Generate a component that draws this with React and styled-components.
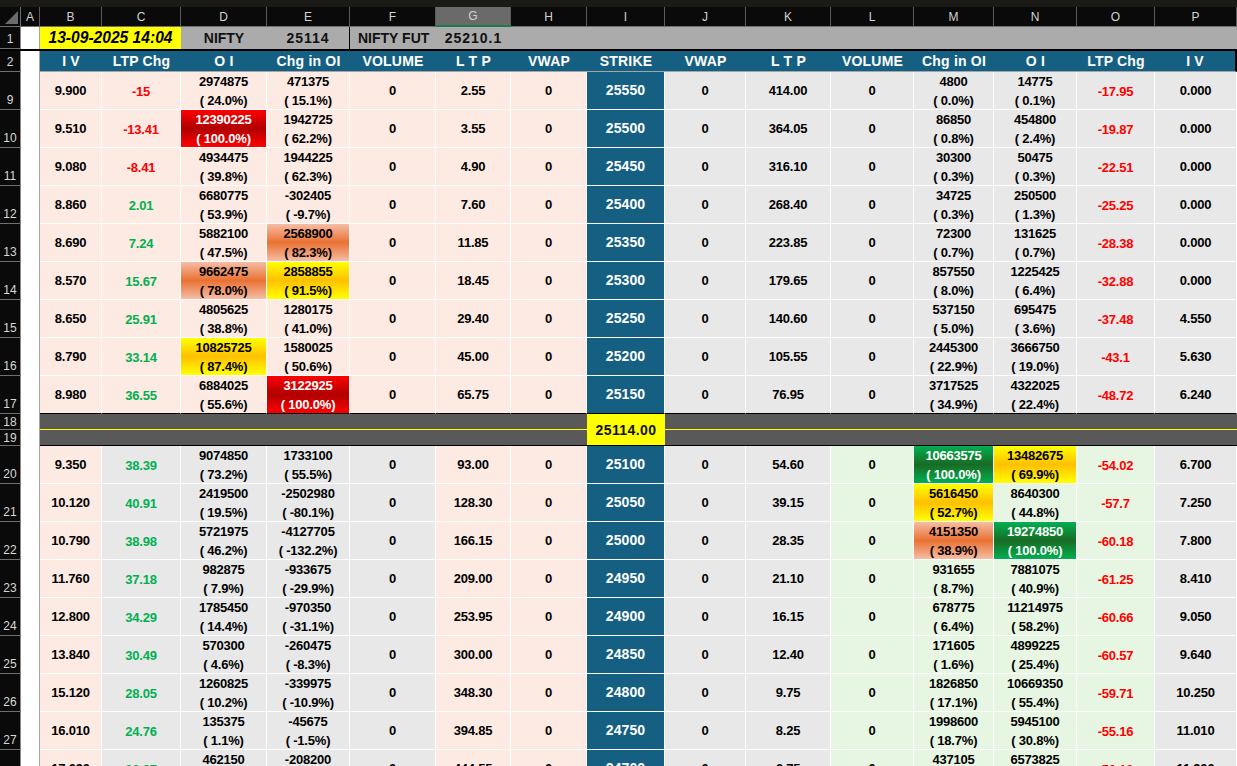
import React from "react";
import styled, {createGlobalStyle, css} from "styled-components";

const columns = "21px 19px 62px 79px 86px 83px 86px 75px 76px 78px 81px 85px 83px 80px 83px 78px 82px";
const letters = ["A", "B", "C", "D", "E", "F", "G", "H", "I", "J", "K", "L", "M", "N", "O", "P"];
const titles = ["I V", "LTP Chg", "O I", "Chg in OI", "VOLUME", "L T P", "VWAP", "STRIKE", "VWAP", "L T P", "VOLUME", "Chg in OI", "O I", "LTP Chg", "I V"];

// iv, chg, oi, chg oi, ltp, strike, ltp, chg oi, oi, chg, iv  (third value of a pair = highlight)
const upper = [
  [9, "9.900", "-15", ["2974875", "24.0"], ["471375", "15.1"], "2.55", "25550", "414.00", ["4800", "0.0"], ["14775", "0.1"], "-17.95", "0.000"],
  [10, "9.510", "-13.41", ["12390225", "100.0", "red"], ["1942725", "62.2"], "3.55", "25500", "364.05", ["86850", "0.8"], ["454800", "2.4"], "-19.87", "0.000"],
  [11, "9.080", "-8.41", ["4934475", "39.8"], ["1944225", "62.3"], "4.90", "25450", "316.10", ["30300", "0.3"], ["50475", "0.3"], "-22.51", "0.000"],
  [12, "8.860", "2.01", ["6680775", "53.9"], ["-302405", "-9.7"], "7.60", "25400", "268.40", ["34725", "0.3"], ["250500", "1.3"], "-25.25", "0.000"],
  [13, "8.690", "7.24", ["5882100", "47.5"], ["2568900", "82.3", "orange"], "11.85", "25350", "223.85", ["72300", "0.7"], ["131625", "0.7"], "-28.38", "0.000"],
  [14, "8.570", "15.67", ["9662475", "78.0", "orange"], ["2858855", "91.5", "yellow"], "18.45", "25300", "179.65", ["857550", "8.0"], ["1225425", "6.4"], "-32.88", "0.000"],
  [15, "8.650", "25.91", ["4805625", "38.8"], ["1280175", "41.0"], "29.40", "25250", "140.60", ["537150", "5.0"], ["695475", "3.6"], "-37.48", "4.550"],
  [16, "8.790", "33.14", ["10825725", "87.4", "yellow"], ["1580025", "50.6"], "45.00", "25200", "105.55", ["2445300", "22.9"], ["3666750", "19.0"], "-43.1", "5.630"],
  [17, "8.980", "36.55", ["6884025", "55.6"], ["3122925", "100.0", "red"], "65.75", "25150", "76.95", ["3717525", "34.9"], ["4322025", "22.4"], "-48.72", "6.240"],
];

const lower = [
  [20, "9.350", "38.39", ["9074850", "73.2"], ["1733100", "55.5"], "93.00", "25100", "54.60", ["10663575", "100.0", "green"], ["13482675", "69.9", "yellow"], "-54.02", "6.700"],
  [21, "10.120", "40.91", ["2419500", "19.5"], ["-2502980", "-80.1"], "128.30", "25050", "39.15", ["5616450", "52.7", "yellow"], ["8640300", "44.8"], "-57.7", "7.250"],
  [22, "10.790", "38.98", ["5721975", "46.2"], ["-4127705", "-132.2"], "166.15", "25000", "28.35", ["4151350", "38.9", "orange"], ["19274850", "100.0", "green"], "-60.18", "7.800"],
  [23, "11.760", "37.18", ["982875", "7.9"], ["-933675", "-29.9"], "209.00", "24950", "21.10", ["931655", "8.7"], ["7881075", "40.9"], "-61.25", "8.410"],
  [24, "12.800", "34.29", ["1785450", "14.4"], ["-970350", "-31.1"], "253.95", "24900", "16.15", ["678775", "6.4"], ["11214975", "58.2"], "-60.66", "9.050"],
  [25, "13.840", "30.49", ["570300", "4.6"], ["-260475", "-8.3"], "300.00", "24850", "12.40", ["171605", "1.6"], ["4899225", "25.4"], "-60.57", "9.640"],
  [26, "15.120", "28.05", ["1260825", "10.2"], ["-339975", "-10.9"], "348.30", "24800", "9.75", ["1826850", "17.1"], ["10669350", "55.4"], "-59.71", "10.250"],
  [27, "16.010", "24.76", ["135375", "1.1"], ["-45675", "-1.5"], "394.85", "24750", "8.25", ["1998600", "18.7"], ["5945100", "30.8"], "-55.16", "11.010"],
  [28, "17.090", "20.97", ["462150", "3.7"], ["-208200", "-6.7"], "444.55", "24700", "6.75", ["437105", "4.1"], ["6573825", "34.1"], "-50.10", "11.900"],
];

const upperTones = {iv: "pink", chg: "pink", oi: "pink", chgOi: "pink", vol: "pink", ltp: "pink", vwap: "pink", vwap2: "gray", ltp2: "gray", vol2: "gray", chgOi2: "gray", oi2: "gray", chg2: "gray", iv2: "gray"};
const lowerTones = {iv: "pink", chg: "gray", oi: "gray", chgOi: "gray", vol: "gray", ltp: "pink", vwap: "pink", vwap2: "gray", ltp2: "gray", vol2: "green", chgOi2: "green", oi2: "green", chg2: "green", iv2: "gray"};

const tones = {
  pink: css`background: #fdeae3;`,
  gray: css`background: #e8e8e8;`,
  green: css`background: #e7f6e2;`,
  strike: css`background: #156082; font-size: 14px; letter-spacing: 0.1px;`,
  red: css`background: linear-gradient(#f00, #b00000 50%, #f00);`,
  orange: css`background: linear-gradient(#f6bda6, #e97132 50%, #f6bda6);`,
  yellow: css`background: linear-gradient(#ff0, #ffc000 50%, #ff0);`,
  hotGreen: css`background: linear-gradient(#00b050, #196b24 50%, #00b050);`,
};

const GlobalStyle = createGlobalStyle`
  html, body {
    margin: 0;
    height: 766px;
    overflow: hidden;
    background: #fff;
  }
  body {
    font-family: "Liberation Sans", Arial, sans-serif;
  }
`;

const Sheet = styled.div`
  width: 1237px;
  height: 766px;
  overflow: hidden;
`;

const TopStrip = styled.div`
  height: 7px;
  background: #1c1a16;
`;

const Row = styled.div`
  display: grid;
  grid-template-columns: ${columns};
  grid-template-rows: minmax(0, 1fr);
  height: ${(p) => p.$height}px;
`;

const Corner = styled.div`
  background: #0a0a0a;
  border-right: 1px solid #6f6f6f;
  border-bottom: 1px solid #6f6f6f;
  box-sizing: border-box;
  display: flex;
  align-items: flex-end;
  justify-content: flex-end;
  padding: 0 2px 2px 0;
`;

const Letter = styled.div`
  background: ${(p) => (p.$active ? "#6a6a6a" : "#0a0a0a")};
  color: #d2d2d2;
  font-size: 12px;
  display: flex;
  align-items: center;
  justify-content: center;
  box-sizing: border-box;
  border-right: 1px solid #5c5c5c;
  border-bottom: ${(p) => (p.$active ? "2px solid #1f7a4d" : "1px solid #6f6f6f")};
`;

const RowHead = styled.div`
  grid-column: 1;
  grid-row: ${(p) => p.$line || "auto"};
  background: #0a0a0a;
  color: #d8d8d8;
  font-size: 12px;
  box-sizing: border-box;
  border-right: 1px solid #8a8a8a;
  border-bottom: 1px solid #6f6f6f;
  display: flex;
  align-items: flex-end;
  justify-content: center;
  padding-bottom: ${(p) => (p.$tight ? 0 : 2)}px;
  line-height: 13px;
`;

const Blank = styled.div`
  grid-column: 2;
  grid-row: ${(p) => p.$line || "auto"};
  background: #fff;
  box-sizing: border-box;
  border-right: 1px solid #a6a6a6;
`;

const DateCell = styled.div`
  grid-column: span 2;
  background: #ff0;
  color: #000;
  font-size: 15.6px;
  font-weight: bold;
  font-style: italic;
  display: flex;
  align-items: center;
  justify-content: center;
`;

const InfoBar = styled(Row)`
  background: #ababab;
  box-sizing: border-box;
  border-bottom: 2px solid #000;
`;

const InfoCell = styled.div`
  color: #111;
  font-size: 14px;
  font-weight: bold;
  letter-spacing: ${(p) => (p.$wide ? 1 : 0)}px;
  white-space: nowrap;
  display: flex;
  align-items: center;
  justify-content: ${(p) => (p.$left ? "flex-start" : "center")};
  padding-left: ${(p) => (p.$left ? 8 : 0)}px;
  box-sizing: border-box;
  border-right: ${(p) => (p.$divider ? "1px solid #000" : "none")};
`;

const Title = styled.div`
  background: #156082;
  color: #fff;
  font-size: 14px;
  font-weight: bold;
  letter-spacing: 0.2px;
  white-space: pre;
  display: flex;
  align-items: center;
  justify-content: center;
  box-sizing: border-box;
  border-bottom: 1px solid #a6a6a6;
  border-right: ${(p) => (p.$last ? "2px solid #000" : "none")};
`;

const Cell = styled.div`
  font-size: 13px;
  font-weight: bold;
  letter-spacing: -0.2px;
  line-height: 19px;
  ${(p) => tones[p.$tone]}
  box-sizing: border-box;
  border-right: 1px solid #fff;
  border-bottom: 1px solid ${(p) => (p.$closing ? "#000" : "#fff")};
  display: flex;
  flex-direction: column;
  align-items: center;
  justify-content: center;
  color: ${(p) => (p.$tone === "red" || p.$tone === "hotGreen" || p.$tone === "strike" ? "#fff" : "#000")};
  white-space: pre;
`;

const Change = styled.span`
  color: ${(p) => (p.$up ? "#00b050" : "#f00")};
  margin-top: 2px;
`;

const Band = styled.div`
  display: grid;
  grid-template-columns: ${columns};
  grid-template-rows: 16px 16px;
  height: 32px;
`;

const BandStrip = styled.div`
  grid-column: ${(p) => p.$from} / ${(p) => p.$to};
  grid-row: 1 / 3;
  box-sizing: border-box;
  border-bottom: 1px solid #000;
  background: linear-gradient(#595959 0 15px, #ffff00 15px 16px, #595959 16px);
`;

const SpotCell = styled.div`
  grid-column: 10;
  grid-row: 1 / 3;
  box-sizing: border-box;
  background: #ff0;
  border-bottom: 1px solid #000;
  color: #111;
  font-size: 14px;
  font-weight: bold;
  letter-spacing: 0.4px;
  display: flex;
  align-items: center;
  justify-content: center;
`;

const hotTone = (hot) => (hot === "green" ? "hotGreen" : hot);

const OiCell = ({data, tone, closing}) => {
  const [value, pct, hot] = data;
  return (
    <Cell $tone={hot ? hotTone(hot) : tone} $closing={closing}>
      <span>{value}</span>
      <span>{`( ${pct}%)`}</span>
    </Cell>
  );
};

const Chg = ({value, tone, closing}) => (
  <Cell $tone={tone} $closing={closing}>
    <Change $up={!value.startsWith("-")}>{value}</Change>
  </Cell>
);

const ChainRow = ({row, t, closing}) => {
  const [num, iv, chg, oi, chgOi, ltp, strike, ltp2, chgOi2, oi2, chg2, iv2] = row;
  return (
    <Row $height={38}>
      <RowHead>{num}</RowHead>
      <Blank />
      <Cell $tone={t.iv} $closing={closing}>{iv}</Cell>
      <Chg value={chg} tone={t.chg} closing={closing} />
      <OiCell data={oi} tone={t.oi} closing={closing} />
      <OiCell data={chgOi} tone={t.chgOi} closing={closing} />
      <Cell $tone={t.vol} $closing={closing}>0</Cell>
      <Cell $tone={t.ltp} $closing={closing}>{ltp}</Cell>
      <Cell $tone={t.vwap} $closing={closing}>0</Cell>
      <Cell $tone="strike" $closing={closing}>{strike}</Cell>
      <Cell $tone={t.vwap2} $closing={closing}>0</Cell>
      <Cell $tone={t.ltp2} $closing={closing}>{ltp2}</Cell>
      <Cell $tone={t.vol2} $closing={closing}>0</Cell>
      <OiCell data={chgOi2} tone={t.chgOi2} closing={closing} />
      <OiCell data={oi2} tone={t.oi2} closing={closing} />
      <Chg value={chg2} tone={t.chg2} closing={closing} />
      <Cell $tone={t.iv2} $closing={closing}>{iv2}</Cell>
    </Row>
  );
};

const App = () => (
  <Sheet>
    <GlobalStyle />
    <TopStrip />
    <Row $height={20}>
      <Corner>
        <svg width="13" height="13" viewBox="0 0 13 13">
          <polygon points="13,0 13,13 0,13" fill="#6b6b6b" />
        </svg>
      </Corner>
      {letters.map((l) => (
        <Letter key={l} $active={l === "G"}>{l}</Letter>
      ))}
    </Row>
    <InfoBar $height={24}>
      <RowHead>1</RowHead>
      <Blank />
      <DateCell>13-09-2025 14:04</DateCell>
      <InfoCell>NIFTY</InfoCell>
      <InfoCell $wide $divider>25114</InfoCell>
      <InfoCell $left>NIFTY FUT</InfoCell>
      <InfoCell $wide>25210.1</InfoCell>
    </InfoBar>
    <Row $height={21}>
      <RowHead>2</RowHead>
      <Blank />
      {titles.map((t, i) => (
        <Title key={i} $last={i === titles.length - 1}>{t}</Title>
      ))}
    </Row>
    {upper.map((row, i) => (
      <ChainRow key={row[0]} row={row} t={upperTones} closing={i === upper.length - 1} />
    ))}
    <Band>
      <RowHead $tight $line="1">18</RowHead>
      <RowHead $tight $line="2">19</RowHead>
      <Blank $line="1 / 3" />
      <BandStrip $from={3} $to={10} />
      <SpotCell>25114.00</SpotCell>
      <BandStrip $from={11} $to={18} />
    </Band>
    {lower.map((row) => (
      <ChainRow key={row[0]} row={row} t={lowerTones} />
    ))}
  </Sheet>
);

export default App;
